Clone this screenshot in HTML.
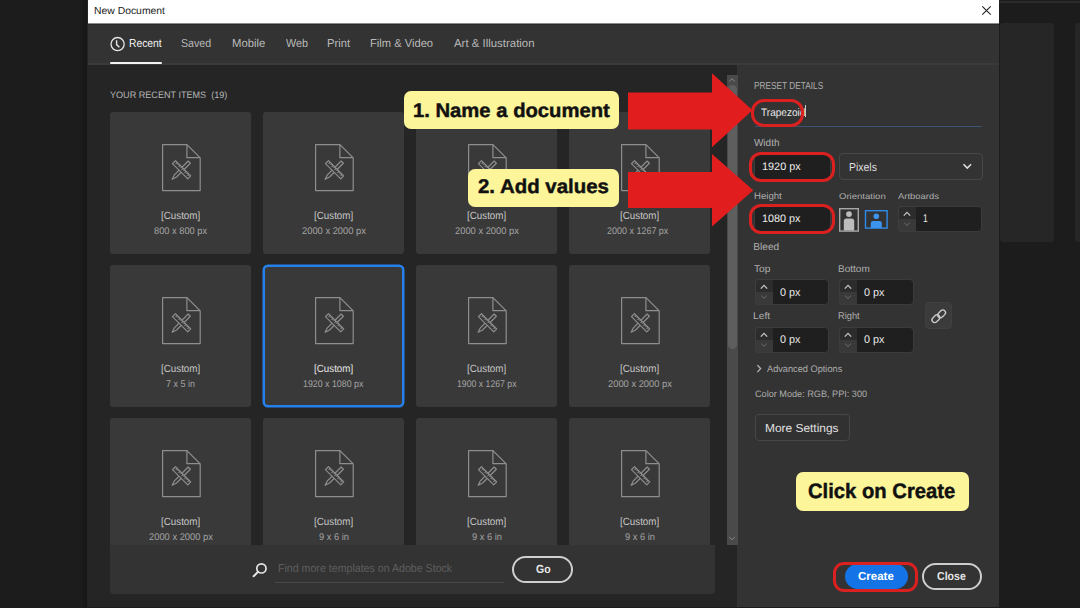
<!DOCTYPE html>
<html><head><meta charset="utf-8">
<style>
html,body{margin:0;padding:0;}
body{width:1080px;height:608px;overflow:hidden;background:#1c1c1c;position:relative;font-family:"Liberation Sans",sans-serif;}
div,svg{position:absolute;box-sizing:border-box;}
.t{white-space:pre;line-height:1;transform-origin:0 0;z-index:5;text-rendering:geometricPrecision;}
.card{width:141px;height:142px;background:#393939;border-radius:3px;z-index:1;}
.card.sel{border:2px solid #2680eb;border-radius:5px;box-shadow:0 0 0 0.5px #2680eb;}
.ic{z-index:2;}
.fld{background:#1f1f1f;border-radius:4px;z-index:2;}
.stp{background:#3a3a3a;border-radius:4px 0 0 4px;z-index:3;}
.yb{background:#fdf599;border-radius:7px;z-index:11;}
.ro{border:3px solid #db2020;z-index:10;}
</style></head>
<body>
<!-- right background -->
<div style="left:999px;top:1px;width:81px;height:2px;background:#2a2a2a"></div>
<div style="left:1000px;top:23px;width:54px;height:219px;background:#262626;border-radius:3px"></div>
<div style="left:1075px;top:23px;width:10px;height:219px;background:#262626;border-radius:3px"></div>
<div style="left:81px;top:0;width:6px;height:608px;background:linear-gradient(90deg,#1c1c1c,#161616)"></div>

<!-- dialog -->
<div style="left:87px;top:0;width:912px;height:607px;background:#242424"></div>
<div style="left:88px;top:0;width:911px;height:23px;background:#ffffff"></div>
<div style="left:88px;top:23px;width:911px;height:1px;background:#8a8a8a"></div>
<svg style="left:980px;top:4px" width="13" height="13" viewBox="0 0 13 13"><path d="M2.3,2.3 L10.7,10.7 M10.7,2.3 L2.3,10.7" stroke="#222" stroke-width="1.1"/></svg>
<div style="left:88px;top:25px;width:911px;height:38px;background:#333333"></div><div style="left:88px;top:24px;width:911px;height:1px;background:#2a2a2a"></div>
<div style="left:88px;top:63px;width:911px;height:2px;background:#3a3a3a"></div>
<div style="left:88px;top:65px;width:649px;height:542px;background:#252525"></div>
<div style="left:737px;top:65px;width:262px;height:542px;background:#333333"></div>

<!-- tabs -->
<svg style="left:109px;top:36px;z-index:5" width="17" height="17" viewBox="0 0 17 17"><circle cx="8.6" cy="8.1" r="6.6" fill="none" stroke="#e6e6e6" stroke-width="1.3"/><path d="M7.6,4.2 V8.6 L10.4,11.2" fill="none" stroke="#e6e6e6" stroke-width="1.4"/></svg>
<div style="left:110px;top:62px;width:52px;height:2px;background:#f2f2f2;border-radius:1px"></div>

<!-- scrollbar -->
<div style="left:727px;top:75px;width:11px;height:470px;background:#4a4a4a"></div>
<div style="left:728px;top:85px;width:9px;height:264px;background:#5e5e5e;border-radius:4.5px"></div>
<svg style="left:727px;top:75px;z-index:2" width="10" height="10" viewBox="0 0 10 10"><path d="M2.2,6.5 L5,3.7 L7.8,6.5" fill="none" stroke="#8a8a8a" stroke-width="1"/></svg>
<svg style="left:727px;top:533px;z-index:2" width="10" height="10" viewBox="0 0 10 10"><path d="M2.2,4 L5,6.8 L7.8,4" fill="none" stroke="#8a8a8a" stroke-width="1"/></svg>

<div class="card" style="left:110px;top:112px"></div>
<svg class="ic" style="left:161.5px;top:143.8px" width="40" height="48" viewBox="0 0 40 48">
<g fill="none" stroke="#8e8e8e" stroke-width="1.2" stroke-linejoin="round">
<path d="M0.6,0.6 H24.9 L38.2,13.9 V46.6 H0.6 Z"/><path d="M24.9,0.6 V13.7 H38.1"/>
<g transform="translate(18.7,26.7) rotate(-45)"><path d="M-12.1,0 L-7.4,-1.55 H12.1 V1.55 H-7.4 Z"/></g>
<g transform="translate(19.6,25.8) rotate(45)"><rect x="-10.8" y="-2.12" width="21.6" height="4.25" fill="#393939"/>
<path d="M-8.40,-2.1 v2.1 M-6.30,-2.1 v1.4 M-4.20,-2.1 v2.1 M-2.10,-2.1 v1.4 M0.00,-2.1 v2.1 M2.10,-2.1 v1.4 M4.20,-2.1 v2.1 M6.30,-2.1 v1.4 M8.40,-2.1 v2.1" stroke-width="1.1"/></g>
</g></svg>
<div class="card" style="left:263px;top:112px"></div>
<svg class="ic" style="left:314.5px;top:143.8px" width="40" height="48" viewBox="0 0 40 48">
<g fill="none" stroke="#8e8e8e" stroke-width="1.2" stroke-linejoin="round">
<path d="M0.6,0.6 H24.9 L38.2,13.9 V46.6 H0.6 Z"/><path d="M24.9,0.6 V13.7 H38.1"/>
<g transform="translate(18.7,26.7) rotate(-45)"><path d="M-12.1,0 L-7.4,-1.55 H12.1 V1.55 H-7.4 Z"/></g>
<g transform="translate(19.6,25.8) rotate(45)"><rect x="-10.8" y="-2.12" width="21.6" height="4.25" fill="#393939"/>
<path d="M-8.40,-2.1 v2.1 M-6.30,-2.1 v1.4 M-4.20,-2.1 v2.1 M-2.10,-2.1 v1.4 M0.00,-2.1 v2.1 M2.10,-2.1 v1.4 M4.20,-2.1 v2.1 M6.30,-2.1 v1.4 M8.40,-2.1 v2.1" stroke-width="1.1"/></g>
</g></svg>
<div class="card" style="left:416px;top:112px"></div>
<svg class="ic" style="left:467.5px;top:143.8px" width="40" height="48" viewBox="0 0 40 48">
<g fill="none" stroke="#8e8e8e" stroke-width="1.2" stroke-linejoin="round">
<path d="M0.6,0.6 H24.9 L38.2,13.9 V46.6 H0.6 Z"/><path d="M24.9,0.6 V13.7 H38.1"/>
<g transform="translate(18.7,26.7) rotate(-45)"><path d="M-12.1,0 L-7.4,-1.55 H12.1 V1.55 H-7.4 Z"/></g>
<g transform="translate(19.6,25.8) rotate(45)"><rect x="-10.8" y="-2.12" width="21.6" height="4.25" fill="#393939"/>
<path d="M-8.40,-2.1 v2.1 M-6.30,-2.1 v1.4 M-4.20,-2.1 v2.1 M-2.10,-2.1 v1.4 M0.00,-2.1 v2.1 M2.10,-2.1 v1.4 M4.20,-2.1 v2.1 M6.30,-2.1 v1.4 M8.40,-2.1 v2.1" stroke-width="1.1"/></g>
</g></svg>
<div class="card" style="left:569px;top:112px"></div>
<svg class="ic" style="left:620.5px;top:143.8px" width="40" height="48" viewBox="0 0 40 48">
<g fill="none" stroke="#8e8e8e" stroke-width="1.2" stroke-linejoin="round">
<path d="M0.6,0.6 H24.9 L38.2,13.9 V46.6 H0.6 Z"/><path d="M24.9,0.6 V13.7 H38.1"/>
<g transform="translate(18.7,26.7) rotate(-45)"><path d="M-12.1,0 L-7.4,-1.55 H12.1 V1.55 H-7.4 Z"/></g>
<g transform="translate(19.6,25.8) rotate(45)"><rect x="-10.8" y="-2.12" width="21.6" height="4.25" fill="#393939"/>
<path d="M-8.40,-2.1 v2.1 M-6.30,-2.1 v1.4 M-4.20,-2.1 v2.1 M-2.10,-2.1 v1.4 M0.00,-2.1 v2.1 M2.10,-2.1 v1.4 M4.20,-2.1 v2.1 M6.30,-2.1 v1.4 M8.40,-2.1 v2.1" stroke-width="1.1"/></g>
</g></svg>
<div class="card" style="left:110px;top:265px"></div>
<svg class="ic" style="left:161.5px;top:296.8px" width="40" height="48" viewBox="0 0 40 48">
<g fill="none" stroke="#8e8e8e" stroke-width="1.2" stroke-linejoin="round">
<path d="M0.6,0.6 H24.9 L38.2,13.9 V46.6 H0.6 Z"/><path d="M24.9,0.6 V13.7 H38.1"/>
<g transform="translate(18.7,26.7) rotate(-45)"><path d="M-12.1,0 L-7.4,-1.55 H12.1 V1.55 H-7.4 Z"/></g>
<g transform="translate(19.6,25.8) rotate(45)"><rect x="-10.8" y="-2.12" width="21.6" height="4.25" fill="#393939"/>
<path d="M-8.40,-2.1 v2.1 M-6.30,-2.1 v1.4 M-4.20,-2.1 v2.1 M-2.10,-2.1 v1.4 M0.00,-2.1 v2.1 M2.10,-2.1 v1.4 M4.20,-2.1 v2.1 M6.30,-2.1 v1.4 M8.40,-2.1 v2.1" stroke-width="1.1"/></g>
</g></svg>
<div class="card sel" style="left:263px;top:265px"></div>
<svg class="ic" style="left:314.5px;top:296.8px" width="40" height="48" viewBox="0 0 40 48">
<g fill="none" stroke="#8e8e8e" stroke-width="1.2" stroke-linejoin="round">
<path d="M0.6,0.6 H24.9 L38.2,13.9 V46.6 H0.6 Z"/><path d="M24.9,0.6 V13.7 H38.1"/>
<g transform="translate(18.7,26.7) rotate(-45)"><path d="M-12.1,0 L-7.4,-1.55 H12.1 V1.55 H-7.4 Z"/></g>
<g transform="translate(19.6,25.8) rotate(45)"><rect x="-10.8" y="-2.12" width="21.6" height="4.25" fill="#393939"/>
<path d="M-8.40,-2.1 v2.1 M-6.30,-2.1 v1.4 M-4.20,-2.1 v2.1 M-2.10,-2.1 v1.4 M0.00,-2.1 v2.1 M2.10,-2.1 v1.4 M4.20,-2.1 v2.1 M6.30,-2.1 v1.4 M8.40,-2.1 v2.1" stroke-width="1.1"/></g>
</g></svg>
<div class="card" style="left:416px;top:265px"></div>
<svg class="ic" style="left:467.5px;top:296.8px" width="40" height="48" viewBox="0 0 40 48">
<g fill="none" stroke="#8e8e8e" stroke-width="1.2" stroke-linejoin="round">
<path d="M0.6,0.6 H24.9 L38.2,13.9 V46.6 H0.6 Z"/><path d="M24.9,0.6 V13.7 H38.1"/>
<g transform="translate(18.7,26.7) rotate(-45)"><path d="M-12.1,0 L-7.4,-1.55 H12.1 V1.55 H-7.4 Z"/></g>
<g transform="translate(19.6,25.8) rotate(45)"><rect x="-10.8" y="-2.12" width="21.6" height="4.25" fill="#393939"/>
<path d="M-8.40,-2.1 v2.1 M-6.30,-2.1 v1.4 M-4.20,-2.1 v2.1 M-2.10,-2.1 v1.4 M0.00,-2.1 v2.1 M2.10,-2.1 v1.4 M4.20,-2.1 v2.1 M6.30,-2.1 v1.4 M8.40,-2.1 v2.1" stroke-width="1.1"/></g>
</g></svg>
<div class="card" style="left:569px;top:265px"></div>
<svg class="ic" style="left:620.5px;top:296.8px" width="40" height="48" viewBox="0 0 40 48">
<g fill="none" stroke="#8e8e8e" stroke-width="1.2" stroke-linejoin="round">
<path d="M0.6,0.6 H24.9 L38.2,13.9 V46.6 H0.6 Z"/><path d="M24.9,0.6 V13.7 H38.1"/>
<g transform="translate(18.7,26.7) rotate(-45)"><path d="M-12.1,0 L-7.4,-1.55 H12.1 V1.55 H-7.4 Z"/></g>
<g transform="translate(19.6,25.8) rotate(45)"><rect x="-10.8" y="-2.12" width="21.6" height="4.25" fill="#393939"/>
<path d="M-8.40,-2.1 v2.1 M-6.30,-2.1 v1.4 M-4.20,-2.1 v2.1 M-2.10,-2.1 v1.4 M0.00,-2.1 v2.1 M2.10,-2.1 v1.4 M4.20,-2.1 v2.1 M6.30,-2.1 v1.4 M8.40,-2.1 v2.1" stroke-width="1.1"/></g>
</g></svg>
<div class="card" style="left:110px;top:418px"></div>
<svg class="ic" style="left:161.5px;top:449.8px" width="40" height="48" viewBox="0 0 40 48">
<g fill="none" stroke="#8e8e8e" stroke-width="1.2" stroke-linejoin="round">
<path d="M0.6,0.6 H24.9 L38.2,13.9 V46.6 H0.6 Z"/><path d="M24.9,0.6 V13.7 H38.1"/>
<g transform="translate(18.7,26.7) rotate(-45)"><path d="M-12.1,0 L-7.4,-1.55 H12.1 V1.55 H-7.4 Z"/></g>
<g transform="translate(19.6,25.8) rotate(45)"><rect x="-10.8" y="-2.12" width="21.6" height="4.25" fill="#393939"/>
<path d="M-8.40,-2.1 v2.1 M-6.30,-2.1 v1.4 M-4.20,-2.1 v2.1 M-2.10,-2.1 v1.4 M0.00,-2.1 v2.1 M2.10,-2.1 v1.4 M4.20,-2.1 v2.1 M6.30,-2.1 v1.4 M8.40,-2.1 v2.1" stroke-width="1.1"/></g>
</g></svg>
<div class="card" style="left:263px;top:418px"></div>
<svg class="ic" style="left:314.5px;top:449.8px" width="40" height="48" viewBox="0 0 40 48">
<g fill="none" stroke="#8e8e8e" stroke-width="1.2" stroke-linejoin="round">
<path d="M0.6,0.6 H24.9 L38.2,13.9 V46.6 H0.6 Z"/><path d="M24.9,0.6 V13.7 H38.1"/>
<g transform="translate(18.7,26.7) rotate(-45)"><path d="M-12.1,0 L-7.4,-1.55 H12.1 V1.55 H-7.4 Z"/></g>
<g transform="translate(19.6,25.8) rotate(45)"><rect x="-10.8" y="-2.12" width="21.6" height="4.25" fill="#393939"/>
<path d="M-8.40,-2.1 v2.1 M-6.30,-2.1 v1.4 M-4.20,-2.1 v2.1 M-2.10,-2.1 v1.4 M0.00,-2.1 v2.1 M2.10,-2.1 v1.4 M4.20,-2.1 v2.1 M6.30,-2.1 v1.4 M8.40,-2.1 v2.1" stroke-width="1.1"/></g>
</g></svg>
<div class="card" style="left:416px;top:418px"></div>
<svg class="ic" style="left:467.5px;top:449.8px" width="40" height="48" viewBox="0 0 40 48">
<g fill="none" stroke="#8e8e8e" stroke-width="1.2" stroke-linejoin="round">
<path d="M0.6,0.6 H24.9 L38.2,13.9 V46.6 H0.6 Z"/><path d="M24.9,0.6 V13.7 H38.1"/>
<g transform="translate(18.7,26.7) rotate(-45)"><path d="M-12.1,0 L-7.4,-1.55 H12.1 V1.55 H-7.4 Z"/></g>
<g transform="translate(19.6,25.8) rotate(45)"><rect x="-10.8" y="-2.12" width="21.6" height="4.25" fill="#393939"/>
<path d="M-8.40,-2.1 v2.1 M-6.30,-2.1 v1.4 M-4.20,-2.1 v2.1 M-2.10,-2.1 v1.4 M0.00,-2.1 v2.1 M2.10,-2.1 v1.4 M4.20,-2.1 v2.1 M6.30,-2.1 v1.4 M8.40,-2.1 v2.1" stroke-width="1.1"/></g>
</g></svg>
<div class="card" style="left:569px;top:418px"></div>
<svg class="ic" style="left:620.5px;top:449.8px" width="40" height="48" viewBox="0 0 40 48">
<g fill="none" stroke="#8e8e8e" stroke-width="1.2" stroke-linejoin="round">
<path d="M0.6,0.6 H24.9 L38.2,13.9 V46.6 H0.6 Z"/><path d="M24.9,0.6 V13.7 H38.1"/>
<g transform="translate(18.7,26.7) rotate(-45)"><path d="M-12.1,0 L-7.4,-1.55 H12.1 V1.55 H-7.4 Z"/></g>
<g transform="translate(19.6,25.8) rotate(45)"><rect x="-10.8" y="-2.12" width="21.6" height="4.25" fill="#393939"/>
<path d="M-8.40,-2.1 v2.1 M-6.30,-2.1 v1.4 M-4.20,-2.1 v2.1 M-2.10,-2.1 v1.4 M0.00,-2.1 v2.1 M2.10,-2.1 v1.4 M4.20,-2.1 v2.1 M6.30,-2.1 v1.4 M8.40,-2.1 v2.1" stroke-width="1.1"/></g>
</g></svg>

<!-- search panel -->
<div style="left:110px;top:545px;width:605px;height:49px;background:#333333;border-radius:0 0 4px 4px;z-index:3"></div>
<svg style="left:251px;top:561px;z-index:4" width="18" height="18" viewBox="0 0 18 18"><circle cx="10.4" cy="7.4" r="4.6" fill="none" stroke="#e6e6e6" stroke-width="1.7"/><path d="M7.1,10.7 L2.6,15.2" stroke="#e6e6e6" stroke-width="2" stroke-linecap="round"/></svg>
<div style="left:275px;top:582px;width:229px;height:1px;background:#474747;z-index:4"></div>
<div style="left:512px;top:556px;width:61px;height:27px;border:2px solid #cfcfcf;border-radius:14px;z-index:4"></div>

<!-- right panel widgets -->
<div style="left:755px;top:126px;width:227px;height:1px;background:#3a5374;z-index:2"></div>
<div style="left:805px;top:105px;width:1px;height:12px;background:#c8c8c8;z-index:6"></div>
<div class="fld" style="left:754px;top:154px;width:77px;height:26px;border:1px solid #3b3b3b"></div>
<div style="left:839px;top:153px;width:144px;height:27px;border:1px solid #474747;border-radius:4px;z-index:2"></div>
<svg style="left:960px;top:160px;z-index:3" width="14" height="12" viewBox="0 0 14 12"><path d="M3.5,4.3 L7.3,8.1 L11.1,4.3" fill="none" stroke="#dcdcdc" stroke-width="1.6"/></svg>
<div class="fld" style="left:754px;top:206px;width:77px;height:26px;border:1px solid #3b3b3b"></div>
<!-- orientation -->
<svg style="left:838px;top:207px;z-index:3" width="52" height="26" viewBox="0 0 52 26">
<rect x="1.7" y="1.7" width="18.6" height="22.4" fill="none" stroke="#a8a8a8" stroke-width="1.4"/>
<circle cx="11" cy="7.1" r="2.9" fill="#bdbdbd"/><path d="M5.8,23.6 V14.2 Q5.8,11.4 8.6,11.4 H13.4 Q16.2,11.4 16.2,14.2 V23.6 Z" fill="#bdbdbd"/>
<rect x="27.5" y="3.7" width="21.6" height="17.4" fill="none" stroke="#2d8ceb" stroke-width="1.4"/>
<circle cx="38.3" cy="9.2" r="2.8" fill="#3d94ee"/><path d="M32.8,21 V16.2 Q32.8,14 35,14 H41.6 Q43.8,14 43.8,16.2 V21 Z" fill="#3d94ee"/>
</svg>
<!-- artboards -->
<div class="fld" style="left:898px;top:206px;width:84px;height:26px;border:1px solid #3b3b3b"></div>
<div class="stp" style="left:898px;top:206px;width:18px;height:26px;background:linear-gradient(#2c2c2c 0,#2c2c2c 50%,#393939 50%);border:1px solid #3d3d3d;border-right:0"></div>
<svg style="left:898px;top:206px;z-index:4" width="18" height="26" viewBox="0 0 18 26"><path d="M5.8,9.6 L9,6.4 L12.2,9.6" fill="none" stroke="#c4c4c4" stroke-width="1.3"/><path d="M6.2,16.6 L9,19.4 L11.8,16.6" fill="none" stroke="#5c5c5c" stroke-width="1.1"/></svg>
<!-- bleed fields -->
<div class="fld" style="left:755px;top:279px;width:74px;height:26px;border:1px solid #3b3b3b"></div>
<div class="fld" style="left:839px;top:279px;width:75px;height:26px;border:1px solid #3b3b3b"></div>
<div class="fld" style="left:755px;top:327px;width:74px;height:26px;border:1px solid #3b3b3b"></div>
<div class="fld" style="left:839px;top:327px;width:75px;height:26px;border:1px solid #3b3b3b"></div>
<div class="stp" style="left:755px;top:279px;width:18px;height:26px;background:linear-gradient(#2c2c2c 0,#2c2c2c 50%,#393939 50%);border:1px solid #3d3d3d;border-right:0"></div>
<div class="stp" style="left:839px;top:279px;width:18px;height:26px;background:linear-gradient(#2c2c2c 0,#2c2c2c 50%,#393939 50%);border:1px solid #3d3d3d;border-right:0"></div>
<div class="stp" style="left:755px;top:327px;width:18px;height:26px;background:linear-gradient(#2c2c2c 0,#2c2c2c 50%,#393939 50%);border:1px solid #3d3d3d;border-right:0"></div>
<div class="stp" style="left:839px;top:327px;width:18px;height:26px;background:linear-gradient(#2c2c2c 0,#2c2c2c 50%,#393939 50%);border:1px solid #3d3d3d;border-right:0"></div>
<svg style="left:755px;top:279px;z-index:4" width="18" height="26" viewBox="0 0 18 26"><path d="M5.8,9.6 L9,6.4 L12.2,9.6" fill="none" stroke="#c4c4c4" stroke-width="1.3"/><path d="M6.2,16.6 L9,19.4 L11.8,16.6" fill="none" stroke="#5c5c5c" stroke-width="1.1"/></svg>
<svg style="left:839px;top:279px;z-index:4" width="18" height="26" viewBox="0 0 18 26"><path d="M5.8,9.6 L9,6.4 L12.2,9.6" fill="none" stroke="#c4c4c4" stroke-width="1.3"/><path d="M6.2,16.6 L9,19.4 L11.8,16.6" fill="none" stroke="#5c5c5c" stroke-width="1.1"/></svg>
<svg style="left:755px;top:327px;z-index:4" width="18" height="26" viewBox="0 0 18 26"><path d="M5.8,9.6 L9,6.4 L12.2,9.6" fill="none" stroke="#c4c4c4" stroke-width="1.3"/><path d="M6.2,16.6 L9,19.4 L11.8,16.6" fill="none" stroke="#5c5c5c" stroke-width="1.1"/></svg>
<svg style="left:839px;top:327px;z-index:4" width="18" height="26" viewBox="0 0 18 26"><path d="M5.8,9.6 L9,6.4 L12.2,9.6" fill="none" stroke="#c4c4c4" stroke-width="1.3"/><path d="M6.2,16.6 L9,19.4 L11.8,16.6" fill="none" stroke="#5c5c5c" stroke-width="1.1"/></svg>
<!-- link button -->
<div style="left:925px;top:302px;width:27px;height:27px;background:#3b3b3b;border:1px solid #404040;border-radius:4px;z-index:2"></div>
<svg style="left:925px;top:302px;z-index:3" width="27" height="27" viewBox="0 0 27 27"><g fill="none" stroke="#cccccc" stroke-width="1.35"><rect x="-4.4" y="-2.7" width="8.8" height="5.4" rx="2.7" transform="translate(16.6,11.9) rotate(-45)"/><rect x="-4.4" y="-2.7" width="8.8" height="5.4" rx="2.7" transform="translate(10.9,16.7) rotate(-45)"/></g></svg>
<!-- advanced chevron -->
<svg style="left:754px;top:362px;z-index:3" width="12" height="13" viewBox="0 0 12 13"><path d="M3.4,3.1 L6.6,6.6 L3.4,10.1" fill="none" stroke="#b8b8b8" stroke-width="1.3"/></svg>
<!-- more settings -->
<div style="left:755px;top:414px;width:95px;height:27px;border:1px solid #474747;background:#313131;border-radius:4px;z-index:2"></div>
<!-- create/close -->
<div style="left:845px;top:564px;width:63px;height:25px;background:#1473e6;border-radius:13px;z-index:2"></div>
<div style="left:922px;top:563px;width:60px;height:27px;border:2px solid #cdcdcd;border-radius:14px;z-index:2"></div>

<!-- annotations -->
<div class="yb" style="left:404px;top:91px;width:215px;height:38px"></div>
<div class="yb" style="left:468px;top:169px;width:151px;height:38px"></div>
<div class="yb" style="left:796px;top:472px;width:173px;height:39px"></div>
<svg style="left:0;top:0;z-index:9" width="1080" height="608" viewBox="0 0 1080 608">
<path d="M628,92.6 H712 V73.3 L752.5,110.3 L712,147.3 V129.6 H628 Z" fill="#e11d1d"/>
<path d="M628,171.9 H712 V154.1 L753.3,190.3 L712,226.4 V208 H628 Z" fill="#e11d1d"/>
</svg>
<div class="ro" style="left:751px;top:99px;width:53px;height:28px;border-radius:13px"></div>
<div class="ro" style="left:749px;top:152px;width:86px;height:29.5px;border-radius:12px"></div>
<div class="ro" style="left:749px;top:204.2px;width:86px;height:29.5px;border-radius:12px"></div>
<div class="ro" style="left:833px;top:562px;width:85px;height:30px;border-radius:11px"></div>

<div class="t" style="left:93.68px;top:6.69px;font-size:10.17px;color:#1b1b1b;transform:scaleX(1.0221);z-index:5;">New Document</div>
<div class="t" style="left:128.80px;top:38.78px;font-size:11.48px;color:#f2f2f2;transform:scaleX(0.8972);z-index:5;">Recent</div>
<div class="t" style="left:181.07px;top:38.78px;font-size:11.48px;color:#b9b9b9;transform:scaleX(0.9290);z-index:5;">Saved</div>
<div class="t" style="left:231.52px;top:38.78px;font-size:11.48px;color:#b9b9b9;transform:scaleX(0.9848);z-index:5;">Mobile</div>
<div class="t" style="left:286.00px;top:38.78px;font-size:11.48px;color:#b9b9b9;transform:scaleX(0.9391);z-index:5;">Web</div>
<div class="t" style="left:327.32px;top:38.78px;font-size:11.48px;color:#b9b9b9;transform:scaleX(0.9826);z-index:5;">Print</div>
<div class="t" style="left:370.03px;top:38.78px;font-size:11.48px;color:#b9b9b9;transform:scaleX(0.9734);z-index:5;">Film &amp; Video</div>
<div class="t" style="left:453.60px;top:38.78px;font-size:11.48px;color:#b9b9b9;transform:scaleX(0.9950);z-index:5;">Art &amp; Illustration</div>
<div class="t" style="left:109.60px;top:90.73px;font-size:9.3px;color:#b6b6b6;transform:scaleX(0.9758);z-index:5;">YOUR RECENT ITEMS&nbsp;&nbsp;(19)</div>
<div class="t" style="left:160.87px;top:211.54px;font-size:10.47px;color:#c8c8c8;transform:scaleX(0.9350);z-index:5;">[Custom]</div>
<div class="t" style="left:153.80px;top:226.75px;font-size:9.74px;color:#a3a3a3;transform:scaleX(0.9536);z-index:5;">800 x 800 px</div>
<div class="t" style="left:313.87px;top:211.54px;font-size:10.47px;color:#c8c8c8;transform:scaleX(0.9350);z-index:5;">[Custom]</div>
<div class="t" style="left:301.80px;top:226.75px;font-size:9.74px;color:#a3a3a3;transform:scaleX(0.9606);z-index:5;">2000 x 2000 px</div>
<div class="t" style="left:466.87px;top:211.54px;font-size:10.47px;color:#c8c8c8;transform:scaleX(0.9350);z-index:5;">[Custom]</div>
<div class="t" style="left:454.80px;top:226.75px;font-size:9.74px;color:#a3a3a3;transform:scaleX(0.9606);z-index:5;">2000 x 2000 px</div>
<div class="t" style="left:619.87px;top:211.54px;font-size:10.47px;color:#c8c8c8;transform:scaleX(0.9350);z-index:5;">[Custom]</div>
<div class="t" style="left:607.00px;top:226.75px;font-size:9.74px;color:#a3a3a3;transform:scaleX(0.9212);z-index:5;">2000 x 1267 px</div>
<div class="t" style="left:160.87px;top:364.54px;font-size:10.47px;color:#c8c8c8;transform:scaleX(0.9350);z-index:5;">[Custom]</div>
<div class="t" style="left:166.25px;top:379.75px;font-size:9.74px;color:#a3a3a3;transform:scaleX(0.9194);z-index:5;">7 x 5 in</div>
<div class="t" style="left:313.87px;top:364.54px;font-size:10.47px;color:#e6e6e6;transform:scaleX(0.9350);z-index:5;">[Custom]</div>
<div class="t" style="left:303.14px;top:379.75px;font-size:9.74px;color:#a3a3a3;transform:scaleX(0.9062);z-index:5;">1920 x 1080 px</div>
<div class="t" style="left:466.87px;top:364.54px;font-size:10.47px;color:#c8c8c8;transform:scaleX(0.9350);z-index:5;">[Custom]</div>
<div class="t" style="left:456.56px;top:379.75px;font-size:9.74px;color:#a3a3a3;transform:scaleX(0.8938);z-index:5;">1900 x 1267 px</div>
<div class="t" style="left:619.87px;top:364.54px;font-size:10.47px;color:#c8c8c8;transform:scaleX(0.9350);z-index:5;">[Custom]</div>
<div class="t" style="left:607.80px;top:379.75px;font-size:9.74px;color:#a3a3a3;transform:scaleX(0.9606);z-index:5;">2000 x 2000 px</div>
<div class="t" style="left:160.87px;top:517.54px;font-size:10.47px;color:#c8c8c8;transform:scaleX(0.9350);z-index:5;">[Custom]</div>
<div class="t" style="left:148.80px;top:532.75px;font-size:9.74px;color:#a3a3a3;transform:scaleX(0.9606);z-index:5;">2000 x 2000 px</div>
<div class="t" style="left:313.87px;top:517.54px;font-size:10.47px;color:#c8c8c8;transform:scaleX(0.9350);z-index:5;">[Custom]</div>
<div class="t" style="left:318.70px;top:532.75px;font-size:9.74px;color:#a3a3a3;transform:scaleX(0.9548);z-index:5;">9 x 6 in</div>
<div class="t" style="left:466.87px;top:517.54px;font-size:10.47px;color:#c8c8c8;transform:scaleX(0.9350);z-index:5;">[Custom]</div>
<div class="t" style="left:471.70px;top:532.75px;font-size:9.74px;color:#a3a3a3;transform:scaleX(0.9548);z-index:5;">9 x 6 in</div>
<div class="t" style="left:619.87px;top:517.54px;font-size:10.47px;color:#c8c8c8;transform:scaleX(0.9350);z-index:5;">[Custom]</div>
<div class="t" style="left:624.70px;top:532.75px;font-size:9.74px;color:#a3a3a3;transform:scaleX(0.9548);z-index:5;">9 x 6 in</div>
<div class="t" style="left:753.58px;top:81.89px;font-size:10.17px;color:#adadad;transform:scaleX(0.8155);z-index:5;">PRESET DETAILS</div>
<div class="t" style="left:760.60px;top:107.89px;font-size:10.76px;color:#e8e8e8;transform:scaleX(0.9362);z-index:5;">Trapezoid</div>
<div class="t" style="left:753.90px;top:138.61px;font-size:10.03px;color:#adadad;transform:scaleX(1.0000);z-index:5;">Width</div>
<div class="t" style="left:762.00px;top:161.77px;font-size:10.9px;color:#ececec;transform:scaleX(1.0000);z-index:5;">1920 px</div>
<div class="t" style="left:849.10px;top:161.85px;font-size:11.63px;color:#dedede;transform:scaleX(0.9000);z-index:5;">Pixels</div>
<div class="t" style="left:753.57px;top:191.63px;font-size:9.3px;color:#adadad;transform:scaleX(1.0308);z-index:5;">Height</div>
<div class="t" style="left:838.90px;top:192.28px;font-size:8.29px;color:#adadad;transform:scaleX(1.1525);z-index:5;">Orientation</div>
<div class="t" style="left:897.90px;top:192.28px;font-size:8.29px;color:#adadad;transform:scaleX(1.1389);z-index:5;">Artboards</div>
<div class="t" style="left:762.31px;top:213.87px;font-size:10.9px;color:#ececec;transform:scaleX(0.9921);z-index:5;">1080 px</div>
<div class="t" style="left:922.84px;top:213.63px;font-size:11.19px;color:#ececec;transform:scaleX(0.7600);z-index:5;">1</div>
<div class="t" style="left:753.30px;top:242.79px;font-size:10.17px;color:#adadad;transform:scaleX(1.0000);z-index:5;">Bleed</div>
<div class="t" style="left:754.00px;top:264.73px;font-size:9.88px;color:#adadad;transform:scaleX(1.0312);z-index:5;">Top</div>
<div class="t" style="left:838.18px;top:264.73px;font-size:9.88px;color:#adadad;transform:scaleX(1.0167);z-index:5;">Bottom</div>
<div class="t" style="left:779.50px;top:287.74px;font-size:11.05px;color:#ececec;transform:scaleX(0.9762);z-index:5;">0 px</div>
<div class="t" style="left:864.00px;top:287.74px;font-size:11.05px;color:#ececec;transform:scaleX(0.9762);z-index:5;">0 px</div>
<div class="t" style="left:752.95px;top:311.55px;font-size:9.74px;color:#adadad;transform:scaleX(1.0533);z-index:5;">Left</div>
<div class="t" style="left:838.25px;top:311.55px;font-size:9.74px;color:#adadad;transform:scaleX(0.9545);z-index:5;">Right</div>
<div class="t" style="left:779.50px;top:334.84px;font-size:11.05px;color:#ececec;transform:scaleX(0.9762);z-index:5;">0 px</div>
<div class="t" style="left:864.00px;top:334.84px;font-size:11.05px;color:#ececec;transform:scaleX(0.9762);z-index:5;">0 px</div>
<div class="t" style="left:767.20px;top:364.78px;font-size:9.59px;color:#adadad;transform:scaleX(0.9615);z-index:5;">Advanced Options</div>
<div class="t" style="left:754.70px;top:389.83px;font-size:9.3px;color:#adadad;transform:scaleX(0.9816);z-index:5;">Color Mode: RGB, PPI: 300</div>
<div class="t" style="left:764.57px;top:422.75px;font-size:11.63px;color:#e0e0e0;transform:scaleX(1.0254);z-index:5;">More Settings</div>
<div class="t" style="left:858.40px;top:570.85px;font-size:11.63px;color:#ffffff;font-weight:bold;transform:scaleX(0.9889);z-index:5;">Create</div>
<div class="t" style="left:936.80px;top:570.85px;font-size:11.63px;color:#e6e6e6;font-weight:bold;transform:scaleX(0.9094);z-index:5;">Close</div>
<div class="t" style="left:535.70px;top:563.73px;font-size:11.77px;color:#e6e6e6;font-weight:bold;transform:scaleX(0.8938);z-index:5;">Go</div>
<div class="t" style="left:278.47px;top:563.78px;font-size:11.48px;color:#5e5e5e;transform:scaleX(0.9262);z-index:5;">Find more templates on Adobe Stock</div>
<div class="t" style="left:412.87px;top:101.89px;font-size:19.62px;color:#111111;font-weight:bold;transform:scaleX(1.0321);z-index:12;-webkit-text-stroke:0.45px #111;">1. Name a document</div>
<div class="t" style="left:478.17px;top:177.86px;font-size:19.77px;color:#111111;font-weight:bold;transform:scaleX(1.0328);z-index:12;-webkit-text-stroke:0.45px #111;">2. Add values</div>
<div class="t" style="left:808.03px;top:481.70px;font-size:20.79px;color:#111111;font-weight:bold;transform:scaleX(0.9733);z-index:12;-webkit-text-stroke:0.45px #111;">Click on Create</div>
</body></html>
